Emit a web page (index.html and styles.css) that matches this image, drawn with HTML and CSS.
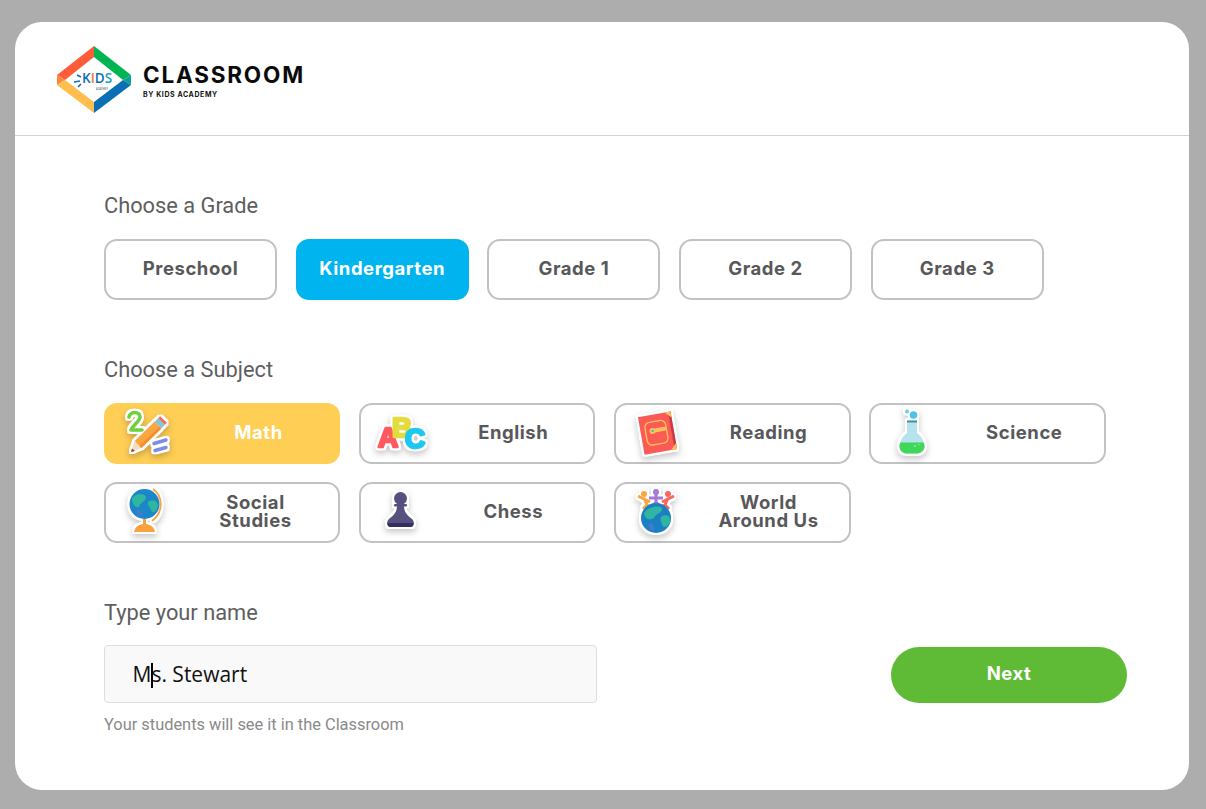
FILE: index.html
```html
<!DOCTYPE html>
<html lang="en">
<head>
<meta charset="utf-8">
<title>Classroom by Kids Academy</title>
<link rel="stylesheet" href="styles.css">
</head>
<body>
<div class="card">
  <header class="header">
    <svg class="logo" viewBox="0 0 74 68" width="74" height="68">
      <polygon fill="#ff5c39" points="0,29 37,0 37,11 8,34"/>
      <polygon fill="#f98a3c" points="0,29 8,34 0,39"/>
      <polygon fill="#ffbe4d" points="0,39 8,34 37,56 37,67"/>
      <polygon fill="#00b451" points="37,0 74,29 66,34 37,11"/>
      <polygon fill="#0aa19a" points="74,29 66,34 74,39"/>
      <polygon fill="#0a6fb5" points="74,39 66,34 37,56 37,67"/>
      <text class="logo-kids" x="25" y="37">K<tspan fill="#f0773d">I</tspan>D<tspan fill="#1a9bc4">S</tspan></text>
      <text class="logo-tiny" x="39" y="43.5">ACADEMY</text>
      <path d="M24 31l-4-2M23 35l-6 1M24 38l-3 3" stroke="#0a6fb5" stroke-width="1.6" fill="none"/>
    </svg>
    <div class="brand">
      <div class="brand-name">CLASSROOM</div>
      <div class="brand-sub">BY KIDS ACADEMY</div>
    </div>
  </header>
  <main class="main">
    <section class="section">
      <h2 class="label">Choose a Grade</h2>
      <div class="grades">
        <button class="btn">Preschool</button>
        <button class="btn btn-blue">Kindergarten</button>
        <button class="btn">Grade 1</button>
        <button class="btn">Grade 2</button>
        <button class="btn">Grade 3</button>
      </div>
    </section>
    <section class="section">
      <h2 class="label">Choose a Subject</h2>
      <div class="subjects">
        <button class="btn subject btn-yellow">
          <svg class="icon" viewBox="0 0 50 50">
            <g class="sticker">
              <path d="M7 8C8 2 18 2 18 8C18 12 12 15 9 21H20" fill="none" stroke="#6fd13f" stroke-width="3.6" stroke-linecap="round" stroke-linejoin="round"/>
              <polygon points="9,43 12.5,32 19.5,39" fill="#f8dcbc"/>
              <polygon points="9,43 10,39.5 13,42" fill="#a8323a"/>
              <line x1="16" y1="35.5" x2="36" y2="16" stroke="#f9a540" stroke-width="9.5"/>
              <line x1="18.5" y1="38" x2="38.5" y2="18.5" stroke="#f58d2c" stroke-width="2.6"/>
              <line x1="36" y1="16" x2="39.5" y2="12.5" stroke="#7cc7d8" stroke-width="9.5"/>
              <line x1="39.5" y1="12.5" x2="41.5" y2="10.5" stroke="#f2685c" stroke-width="9.5"/>
              <path d="M32 34.5L44 31M33 41.5L44 38.5" stroke="#7b8de8" stroke-width="3.4" stroke-linecap="round"/>
            </g>
          </svg>
          <span class="subject-name">Math</span>
        </button>
        <button class="btn subject">
          <svg class="icon" viewBox="0 0 50 50">
            <g class="sticker">
              <text class="abc"><tspan class="abc-a" x="1" y="38">A</tspan><tspan class="abc-b" x="15" y="28">B</tspan><tspan class="abc-c" x="28" y="39">C</tspan></text>
            </g>
          </svg>
          <span class="subject-name">English</span>
        </button>
        <button class="btn subject">
          <svg class="icon" viewBox="0 0 50 50">
            <g class="sticker">
              <g transform="rotate(-10 26 24)">
                <rect x="9" y="5" width="33" height="38" fill="#fb5a55"/>
                <rect x="39.5" y="5" width="2.5" height="38" fill="#c93a45"/>
                <rect x="14" y="12" width="21" height="23" rx="5" fill="none" stroke="#ffc05c" stroke-width="1.4"/>
                <rect x="21" y="19" width="14" height="4" rx="2" fill="#ffc05c"/>
                <circle cx="21" cy="21" r="3" fill="#ffc05c"/>
                <circle cx="21" cy="21" r="1.2" fill="#2bc7a6"/>
                <path d="M36 5h6v6zM36 43h6v-6z" fill="#ffc05c"/>
              </g>
            </g>
          </svg>
          <span class="subject-name">Reading</span>
        </button>
        <button class="btn subject">
          <svg class="icon" viewBox="0 0 50 50">
            <g class="sticker">
              <circle cx="20" cy="2.5" r="2" fill="#6ccbe8"/>
              <circle cx="26.5" cy="6" r="3.8" fill="#4cc3e6"/>
              <path d="M20 11.5H30V24C36 29 38 34 37.5 38C37 42 33 44.5 30 44.5H20C16 44.5 13 42 12.5 38C12 34 14 29 20 24Z" fill="#b6e3ee"/>
              <path d="M13.5 33.5H36.5C37.3 35.5 37.7 36.5 37.5 38C37 42 33 44.5 30 44.5H20C16 44.5 13 42 12.5 38C12.3 36.5 12.7 35.5 13.5 33.5Z" fill="#3fd65a"/>
              <circle cx="28" cy="37" r="0.8" fill="#c9f5d0"/>
              <circle cx="32" cy="35.5" r="0.6" fill="#c9f5d0"/>
              <rect x="20" y="11.5" width="10" height="2" fill="#4a90a8"/>
            </g>
          </svg>
          <span class="subject-name">Science</span>
        </button>
        <button class="btn subject">
          <svg class="icon" viewBox="0 0 50 50">
            <g class="sticker">
              <path d="M31 1C41 8 42 24 30 33" fill="none" stroke="#f9a13c" stroke-width="1.8"/>
              <rect x="21" y="31" width="3" height="6" fill="#f9a13c"/>
              <path d="M12 44C13 38 18 36 22.5 36C27 36 32 38 33 44Z" fill="#f9a13c"/>
              <circle cx="22.5" cy="16" r="15" fill="#1b87c9"/>
              <path d="M10 10C15 5 22 5 24 9C24 14 18 14 17 19C13 20 10 16 10 10ZM26 14C31 11 36 13 36 18C34 25 30 26 29 22C28 18 25 18 26 14Z" fill="#2fb5a0"/>
              <path d="M15 22C19 22 21 25 20 29C17 28 14 26 15 22Z" fill="#4a78c9"/>
            </g>
          </svg>
          <span class="subject-name subject-name-social">Social<br>Studies</span>
        </button>
        <button class="btn subject">
          <svg class="icon" viewBox="0 0 50 50">
            <g class="sticker">
              <circle cx="23.5" cy="10.5" r="6.5" fill="#56507f"/>
              <rect x="17" y="16" width="13" height="2.5" rx="1.2" fill="#56507f"/>
              <path d="M20 18H27C27 24 30 27 35 31C38 34 37 38 35 38H12C10 38 9 34 12 31C17 27 20 24 20 18Z" fill="#56507f"/>
              <path d="M10.5 35H36.5C36.5 37 36 39 34 39H13C11 39 10.5 37 10.5 35Z" fill="#332f63"/>
            </g>
          </svg>
          <span class="subject-name">Chess</span>
        </button>
        <button class="btn subject">
          <svg class="icon" viewBox="0 0 50 50">
            <g class="sticker">
              <circle cx="12" cy="6" r="3" fill="#f9a540"/>
              <path d="M6 8L18 14M12 10L15 17M15 17L11 21M15 17L19 20" stroke="#f9a540" stroke-width="3" fill="none"/>
              <circle cx="36" cy="6" r="3" fill="#f76560"/>
              <path d="M42 8L30 14M36 10L33 17M33 17L37 21M33 17L29 20" stroke="#f76560" stroke-width="3" fill="none"/>
              <circle cx="24" cy="4" r="3" fill="#a678d8"/>
              <path d="M17 10H31M24 6V14M24 14L20 19M24 14L28 19" stroke="#a678d8" stroke-width="3" fill="none"/>
              <circle cx="24" cy="30" r="15" fill="#1b7fc4"/>
              <path d="M12 25C16 19 26 17 30 20C31 25 24 25 22 30C17 33 13 31 12 25ZM30 28C36 26 39 29 38 34C36 39 31 41 30 36C29 33 27 31 30 28Z" fill="#2fb5a0"/>
              <path d="M17 36C20 35 23 38 22 43C19 42 16 40 17 36Z" fill="#4a78c9"/>
            </g>
          </svg>
          <span class="subject-name">World<br>Around Us</span>
        </button>
      </div>
    </section>
    <section class="section">
      <h2 class="label">Type your name</h2>
      <div class="name-row">
        <div class="name-col">
          <div class="name-input">M<span class="caret"></span>s. Stewart</div>
          <p class="hint">Your students will see it in the Classroom</p>
        </div>
        <button class="next">Next</button>
      </div>
    </section>
  </main>
</div>
</body>
</html>
```
FILE: styles.css
```css
* { box-sizing: border-box; }
html, body { margin: 0; height: 100%; }
body {
  background: #adadad;
  padding: 22px 17px 19px 15px;
  font-family: Roboto, "Liberation Sans", sans-serif;
  overflow: hidden;
}
.card {
  background: #fff;
  border-radius: 27px;
  height: 768px;
  display: flex;
  flex-direction: column;
}
.header {
  height: 114px;
  border-bottom: 1px solid #d2d2d2;
  display: flex;
  align-items: center;
  padding: 2px 0 0 42px;
  gap: 12px;
  flex: none;
}
.logo { display: block; flex: none; }
.logo-kids {
  font: 600 13.5px "Open Sans", "Liberation Sans", sans-serif;
  fill: #0a6fb5;
}
.logo-tiny {
  font: 600 2.5px "Open Sans", "Liberation Sans", sans-serif;
  fill: #55707f;
}
.brand { display: flex; flex-direction: column; padding-top: 3px; }
.brand-name {
  font: 700 22.5px/24px Inter, "Liberation Sans", sans-serif;
  letter-spacing: 1.8px;
  color: #0b0b0b;
}
.brand-sub {
  font: 700 7px/9px Inter, "Liberation Sans", sans-serif;
  letter-spacing: 0.6px;
  color: #111;
  margin-top: 3px;
}
.main {
  padding: 57px 62px 0 89px;
  display: flex;
  flex-direction: column;
  gap: 57px;
}
.label {
  margin: 0 0 20px;
  font: 400 21.8px/26px Roboto, sans-serif;
  color: #5e5e5e;
}
.grades {
  display: grid;
  grid-template-columns: repeat(5, 173px);
  column-gap: 18.7px;
}
.subjects {
  display: grid;
  grid-template-columns: 236px 236px 237px 237px;
  gap: 18px 18.75px;
}
.btn {
  height: 61px;
  background: #fff;
  border: 2px solid #c2c2c2;
  border-radius: 13px;
  font: 700 18.5px/18px Inter, "Liberation Sans", sans-serif;
  letter-spacing: 0.55px;
  color: #58585a;
  padding: 0 0 4px;
  text-align: center;
}
.btn-blue { background: #00b5ef; border-color: #00b5ef; color: #fff; }
.btn-yellow { background: #ffce55; border-color: #ffce55; color: #fff; }
.subject {
  display: flex;
  align-items: center;
  padding: 0;
}
.icon {
  width: 50px;
  height: 50px;
  flex: none;
  margin-left: 16px;
  overflow: visible;
}
.sticker {
  filter: drop-shadow(2px 0 0 #fff) drop-shadow(-2px 0 0 #fff) drop-shadow(0 2px 0 #fff) drop-shadow(0 -2px 0 #fff) drop-shadow(0 3px 3px rgba(0, 0, 0, 0.22));
}
.abc {
  font: 700 28px "Liberation Sans", sans-serif;
  stroke-width: 2.6px;
  stroke-linejoin: round;
}
.abc-a { fill: #ff5a5f; stroke: #ff5a5f; }
.abc-b { fill: #e3dc3f; stroke: #e3dc3f; }
.abc-c { fill: #1cc8f0; stroke: #1cc8f0; }
.subject-name { flex: 1; margin-left: 7px; padding-bottom: 4px; }
.subject-name-social { padding-right: 6px; }
.name-row {
  display: flex;
  justify-content: space-between;
  align-items: flex-start;
  margin-top: -1px;
}
.name-col { width: 493px; }
.name-input {
  height: 58px;
  background: #f9f9f9;
  border: 1px solid #dedede;
  border-radius: 4px;
  padding-left: 27.5px;
  font: 400 21px/56px "Open Sans", sans-serif;
  color: #111;
  white-space: nowrap;
}
.caret {
  display: inline-block;
  width: 1.5px;
  height: 25px;
  margin-right: -1.5px;
  background: #000;
  vertical-align: -6px;
}
.hint {
  margin: 12px 0 0;
  font: 400 16.4px/20px Roboto, sans-serif;
  color: #8a8a8a;
}
.next {
  width: 236px;
  height: 56px;
  margin-top: 2px;
  border: 0;
  border-radius: 28px;
  background: #5fba36;
  color: #fff;
  padding: 0 0 4px;
  font: 700 18.5px/18px Inter, "Liberation Sans", sans-serif;
  letter-spacing: 0.55px;
}
```
